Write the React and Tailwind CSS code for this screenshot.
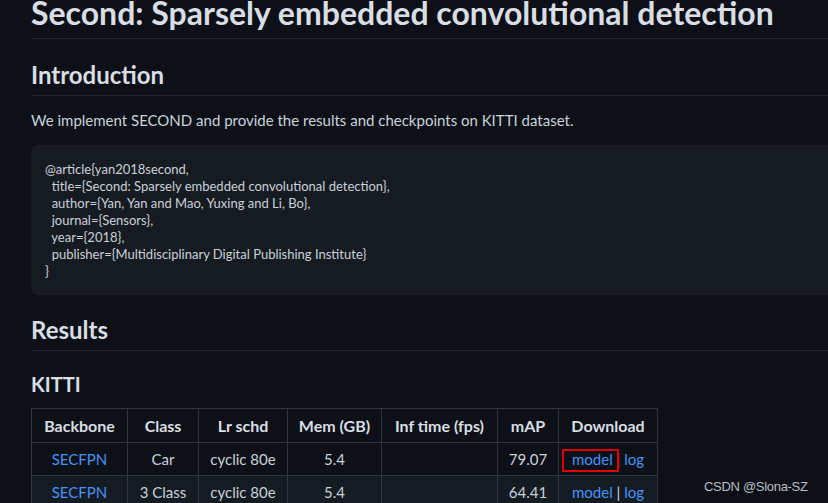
import React from "react";

const F = { fontFamily: "Lato, 'Noto Sans', sans-serif" };

function Model() {
  return (
    <span>
      <a className="text-[#4493f8]">model</a>
      <span className="text-[#c9d1d9]"> | </span>
      <a className="text-[#4493f8]">log</a>
    </span>
  );
}

export default function App() {
  const rows = [
    ["SECFPN", "Car", "cyclic 80e", "5.4", "", "79.07"],
    ["SECFPN", "3 Class", "cyclic 80e", "5.4", "", "64.41"],
  ];
  const heads = ["Backbone", "Class", "Lr schd", "Mem (GB)", "Inf time (fps)", "mAP", "Download"];
  const widths = [96, 71, 89, 94, 116, 61, 99];
  return (
    <div className="relative w-[828px] h-[503px] overflow-hidden bg-[#0d1117] text-[#c9d1d9]" style={F}>
      <div className="pl-[31px]">
        <h1 className="-mt-[7px] pb-[5px] text-[32px] leading-[40px] font-bold text-[#d8dee4] border-b border-[#21262d] whitespace-nowrap">
          Second: Sparsely embedded convolutional detection
        </h1>
        <h2 className="mt-[21px] pb-[5px] text-[24px] leading-[30px] font-bold text-[#d8dee4] border-b border-[#21262d]">
          Introduction
        </h2>
        <p className="mt-[12px] text-[15px] leading-[24px]">
          We implement SECOND and provide the results and checkpoints on KITTI dataset.
        </p>
        <div className="mt-[13px] w-[820px] rounded-[6px] bg-[#161b22] pl-[14px] pt-[16px] pb-[15px] text-[13px] leading-[17px] whitespace-pre">
          {`@article{yan2018second,
  title={Second: Sparsely embedded convolutional detection},
  author={Yan, Yan and Mao, Yuxing and Li, Bo},
  journal={Sensors},
  year={2018},
  publisher={Multidisciplinary Digital Publishing Institute}
}`}
        </div>
        <h2 className="mt-[20px] pb-[5px] text-[24px] leading-[30px] font-bold text-[#d8dee4] border-b border-[#21262d]">
          Results
        </h2>
        <h3 className="mt-[21px] text-[20px] leading-[25px] font-bold text-[#d8dee4]">KITTI</h3>
        <table className="mt-[11px] table-fixed border-collapse w-[626px] text-[15px] text-center">
          <colgroup>
            {widths.map((w, i) => (
              <col key={i} style={{ width: w }} />
            ))}
          </colgroup>
          <thead>
            <tr className="h-[34px]">
              {heads.map((h) => (
                <th key={h} className="border border-[#30363d] text-[16px] font-bold text-[#d8dee4] whitespace-nowrap">
                  {h}
                </th>
              ))}
            </tr>
          </thead>
          <tbody>
            {rows.map((r, i) => (
              <tr key={i} className={i === 1 ? "h-[33px] bg-[#151b23]" : "h-[33px]"}>
                <td className="border border-[#30363d] text-[#4493f8]">{r[0]}</td>
                <td className="border border-[#30363d]">{r[1]}</td>
                <td className="border border-[#30363d]">{r[2]}</td>
                <td className="border border-[#30363d]">{r[3]}</td>
                <td className="border border-[#30363d]">{r[4]}</td>
                <td className="border border-[#30363d]">{r[5]}</td>
                <td className="border border-[#30363d]">
                  <Model />
                </td>
              </tr>
            ))}
          </tbody>
        </table>
      </div>
      <div className="absolute left-[562px] top-[449px] w-[57px] h-[23px] border-2 border-[#e00000]" />
      <div
        className="absolute left-[704px] top-[477px] text-[13px] leading-[20px] tracking-[-0.3px] whitespace-nowrap text-[#b9bcc2]"
        style={{ fontFamily: "'Liberation Sans', Arial, sans-serif" }}
      >
        CSDN @Slona-SZ
      </div>
    </div>
  );
}
